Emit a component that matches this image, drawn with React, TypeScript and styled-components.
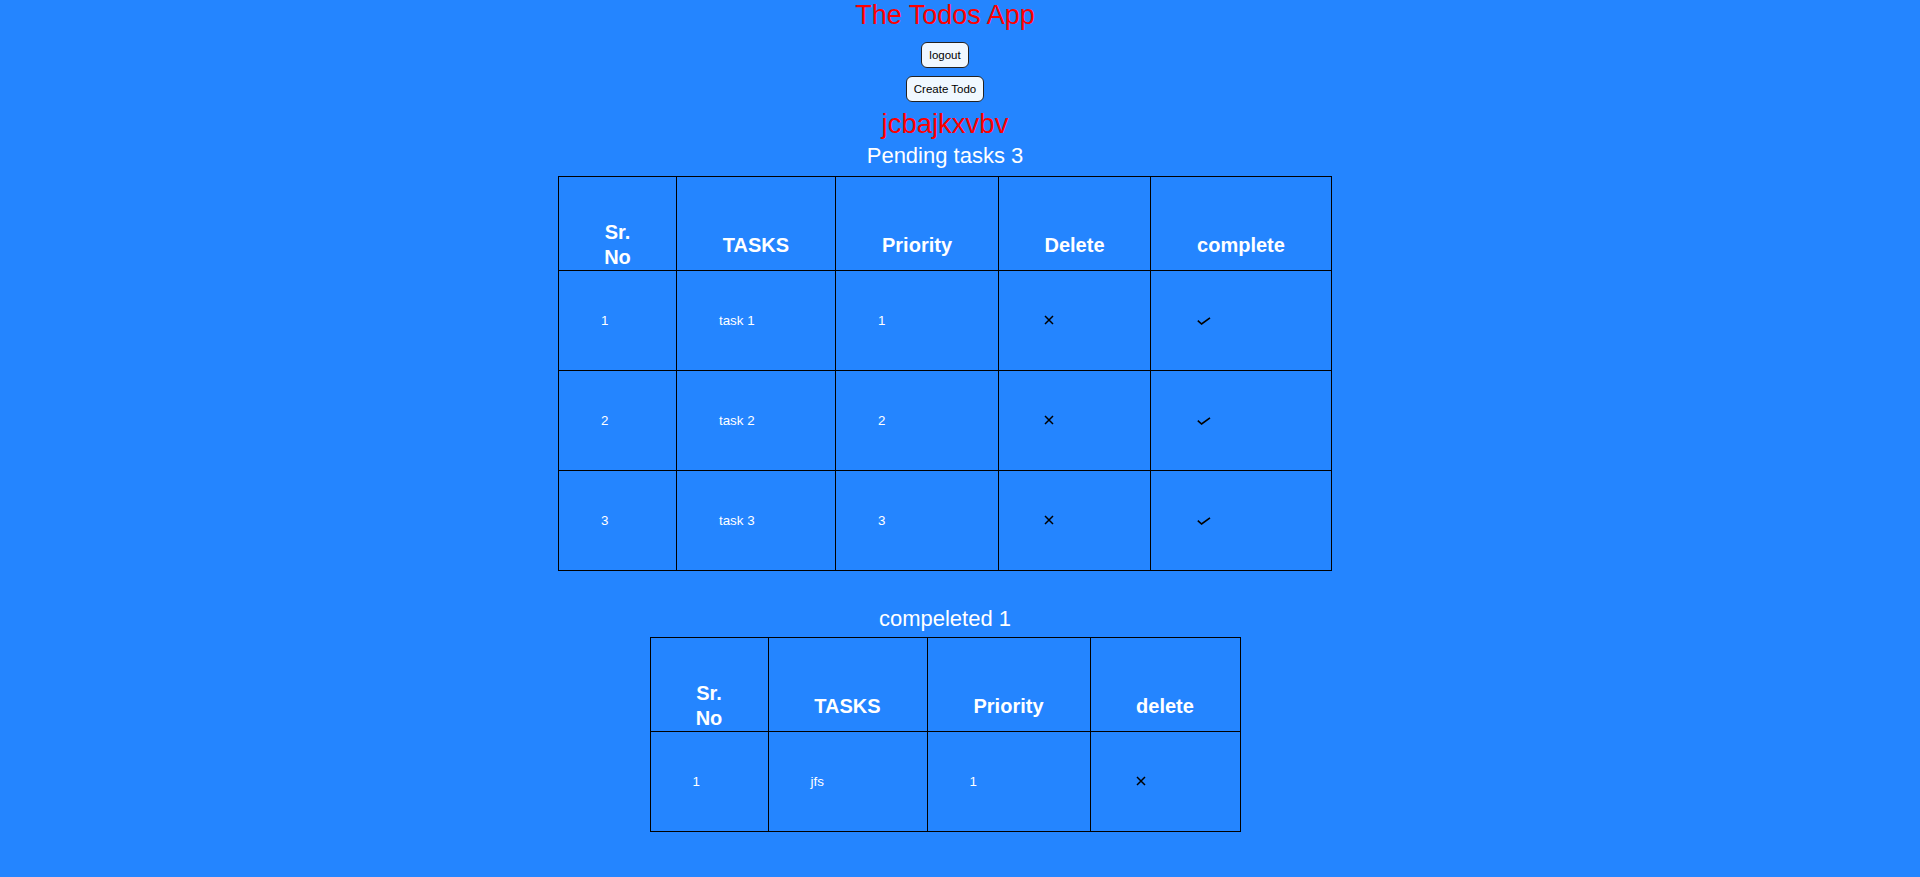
import React from "react";
import styled, { createGlobalStyle } from "styled-components";

const GlobalStyle = createGlobalStyle`
  html, body {
    margin: 0;
    padding: 0;
    background: #2485ff;
    font-family: "Liberation Sans", Arial, sans-serif;
  }
`;

const Page = styled.div`
  box-sizing: border-box;
  width: 1890px;
  min-height: 100vh;
  display: flex;
  flex-direction: column;
  align-items: center;
  background: #2485ff;
`;

const Title = styled.h1<{ $size: number; $mt: number }>`
  margin: ${(p) => p.$mt}px 0 0;
  font-size: ${(p) => p.$size}px;
  line-height: 31px;
  font-weight: 400;
  color: #ff0000;
`;

const Button = styled.button<{ $mt: number }>`
  margin-top: ${(p) => p.$mt}px;
  box-sizing: border-box;
  height: 26px;
  padding: 0 7px;
  font-family: "Liberation Sans", Arial, sans-serif;
  font-size: 11.5px;
  color: #000;
  background: #f0f8ff;
  border: 1.5px solid #222;
  border-radius: 6px;
  cursor: pointer;
`;

const Heading = styled.h2<{ $mt: number }>`
  margin: ${(p) => p.$mt}px 0 0;
  font-size: 22px;
  line-height: 25px;
  font-weight: 400;
  color: #ffffff;
`;

const Table = styled.table<{ $width: number; $mt: number }>`
  margin-top: ${(p) => p.$mt}px;
  width: ${(p) => p.$width}px;
  border-collapse: collapse;
  table-layout: fixed;
  border: 1px solid #000;
  color: #fff;
`;

const Th = styled.th`
  border: 1px solid #000;
  padding: 43px 40px 0;
  font-size: 20px;
  line-height: 25px;
  font-weight: 700;
  text-align: center;
  vertical-align: middle;
`;

const Td = styled.td`
  border: 1px solid #000;
  height: 100px;
  box-sizing: border-box;
  padding: 0 0 0 42px;
  font-size: 13.33px;
  line-height: 16px;
  text-align: left;
  vertical-align: middle;
`;

const IconButton = styled.span<{ $offset: number }>`
  display: inline-flex;
  align-items: center;
  padding-left: ${(p) => p.$offset}px;
  padding-top: 1px;
  color: #000;
  cursor: pointer;
`;

const CrossIcon = () => (
  <svg width="10" height="10" viewBox="0 0 10 10" fill="none" stroke="#000" strokeWidth="1.5">
    <path d="M1 1 L9 9 M9 1 L1 9" />
  </svg>
);

const CheckIcon = () => (
  <svg width="14" height="8" viewBox="0 0 14 8" fill="none" stroke="#000" strokeWidth="1.6">
    <path d="M0.8 3.6 L4.6 7 L13 0.8" />
  </svg>
);

const pending = [
  { id: 1, task: "task 1", priority: 1 },
  { id: 2, task: "task 2", priority: 2 },
  { id: 3, task: "task 3", priority: 3 },
];

const completed = [{ id: 1, task: "jfs", priority: 1 }];

export default function App() {
  return (
    <>
      <GlobalStyle />
      <Page>
        <Title $size={27} $mt={0}>The Todos App</Title>
        <Button $mt={11}>logout</Button>
        <Button $mt={8}>Create Todo</Button>
        <Title $size={27.5} $mt={6}>jcbajkxvbv</Title>
        <Heading $mt={4}>Pending tasks {pending.length}</Heading>
        <Table $width={773} $mt={8}>
          <colgroup>
            <col style={{ width: 118 }} />
            <col style={{ width: 159 }} />
            <col style={{ width: 163 }} />
            <col style={{ width: 152 }} />
            <col style={{ width: 181 }} />
          </colgroup>
          <thead>
            <tr>
              <Th>Sr. No</Th>
              <Th>TASKS</Th>
              <Th>Priority</Th>
              <Th>Delete</Th>
              <Th>complete</Th>
            </tr>
          </thead>
          <tbody>
            {pending.map((t) => (
              <tr key={t.id}>
                <Td>{t.id}</Td>
                <Td>{t.task}</Td>
                <Td>{t.priority}</Td>
                <Td>
                  <IconButton $offset={3}><CrossIcon /></IconButton>
                </Td>
                <Td>
                  <IconButton $offset={4}><CheckIcon /></IconButton>
                </Td>
              </tr>
            ))}
          </tbody>
        </Table>
        <Heading $mt={35}>compeleted {completed.length}</Heading>
        <Table $width={590} $mt={6}>
          <colgroup>
            <col style={{ width: 118 }} />
            <col style={{ width: 159 }} />
            <col style={{ width: 163 }} />
            <col style={{ width: 150 }} />
          </colgroup>
          <thead>
            <tr>
              <Th>Sr. No</Th>
              <Th>TASKS</Th>
              <Th>Priority</Th>
              <Th>delete</Th>
            </tr>
          </thead>
          <tbody>
            {completed.map((t) => (
              <tr key={t.id}>
                <Td>{t.id}</Td>
                <Td>{t.task}</Td>
                <Td>{t.priority}</Td>
                <Td>
                  <IconButton $offset={3}><CrossIcon /></IconButton>
                </Td>
              </tr>
            ))}
          </tbody>
        </Table>
      </Page>
    </>
  );
}
